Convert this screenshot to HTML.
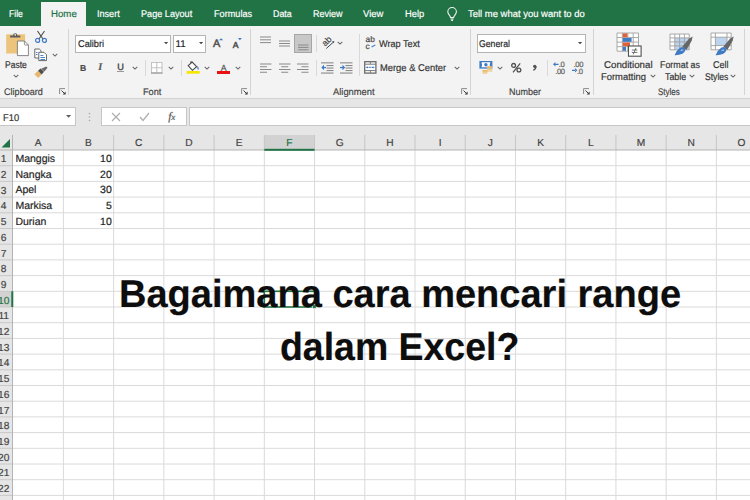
<!DOCTYPE html>
<html><head><meta charset="utf-8"><style>
html,body{margin:0;padding:0;}
body{width:750px;height:500px;overflow:hidden;position:relative;background:#fff;font-family:"Liberation Sans", sans-serif;}
.t{position:absolute;white-space:nowrap;line-height:1;font-family:"Liberation Sans", sans-serif;-webkit-text-stroke:0.18px currentColor;text-rendering:geometricPrecision;}
.big{font-size:37.6px;font-weight:bold;color:#0d0d0d;line-height:1}
</style></head><body>
<div style="position:absolute;left:0;top:0;width:750px;height:26px;background:#217346"></div>
<div style="position:absolute;left:41px;top:2px;width:45.2px;height:24px;background:#f3f3f3"></div>
<div class="t" style="left:8.80px;top:10.26px;font-size:9.80px;color:#ffffff;font-weight:normal;transform:scaleX(0.8810);transform-origin:0 0;">File</div>
<div class="t" style="left:50.70px;top:10.26px;font-size:9.80px;color:#217346;font-weight:normal;transform:scaleX(0.9860);transform-origin:0 0;">Home</div>
<div class="t" style="left:97.30px;top:10.26px;font-size:9.80px;color:#ffffff;font-weight:normal;transform:scaleX(0.9265);transform-origin:0 0;">Insert</div>
<div class="t" style="left:141.30px;top:10.26px;font-size:9.80px;color:#ffffff;font-weight:normal;transform:scaleX(0.9305);transform-origin:0 0;">Page Layout</div>
<div class="t" style="left:213.90px;top:10.26px;font-size:9.80px;color:#ffffff;font-weight:normal;transform:scaleX(0.9323);transform-origin:0 0;">Formulas</div>
<div class="t" style="left:273.30px;top:10.26px;font-size:9.80px;color:#ffffff;font-weight:normal;transform:scaleX(0.9022);transform-origin:0 0;">Data</div>
<div class="t" style="left:313.30px;top:10.26px;font-size:9.80px;color:#ffffff;font-weight:normal;transform:scaleX(0.9146);transform-origin:0 0;">Review</div>
<div class="t" style="left:363.20px;top:10.26px;font-size:9.80px;color:#ffffff;font-weight:normal;transform:scaleX(0.9635);transform-origin:0 0;">View</div>
<div class="t" style="left:404.80px;top:10.26px;font-size:9.80px;color:#ffffff;font-weight:normal;transform:scaleX(0.9534);transform-origin:0 0;">Help</div>
<svg style="position:absolute;left:445px;top:6px" width="14" height="16" viewBox="0 0 14 16"><path d="M5.6 11.6 C5.4 9.6 2.8 8.2 2.8 5.8 A4.3 4.3 0 0 1 11.4 5.8 C11.4 8.2 8.8 9.6 8.6 11.6 Z M5.8 13.2 H8.4 M6.2 14.4 H8" fill="none" stroke="#f4f4f4" stroke-width="1.05"/></svg>
<div class="t" style="left:468.00px;top:10.26px;font-size:9.80px;color:#ffffff;font-weight:normal;transform:scaleX(0.9658);transform-origin:0 0;">Tell me what you want to do</div>
<div style="position:absolute;left:0;top:26px;width:750px;height:72px;background:#f3f3f3"></div>
<div style="position:absolute;left:0;top:98px;width:750px;height:1px;background:#d2d2d2"></div>
<div style="position:absolute;left:0;top:99px;width:750px;height:51px;background:#e6e6e6"></div>
<div style="position:absolute;left:68px;top:29px;width:1px;height:66px;background:#d4d4d4"></div>
<div style="position:absolute;left:250px;top:29px;width:1px;height:66px;background:#d4d4d4"></div>
<div style="position:absolute;left:470px;top:29px;width:1px;height:66px;background:#d4d4d4"></div>
<div style="position:absolute;left:592.5px;top:29px;width:1px;height:66px;background:#d4d4d4"></div>
<div style="position:absolute;left:744px;top:29px;width:1px;height:66px;background:#d4d4d4"></div>
<div style="position:absolute;left:144.5px;top:60px;width:1px;height:16px;background:#d9d9d9"></div>
<div style="position:absolute;left:181.3px;top:60px;width:1px;height:16px;background:#d9d9d9"></div>
<div style="position:absolute;left:315.6px;top:35px;width:1px;height:17px;background:#d9d9d9"></div>
<div style="position:absolute;left:315.6px;top:60px;width:1px;height:16px;background:#d9d9d9"></div>
<div style="position:absolute;left:358.8px;top:34px;width:1px;height:42px;background:#d9d9d9"></div>
<div style="position:absolute;left:547.3px;top:60px;width:1px;height:16px;background:#d9d9d9"></div>
<div class="t" style="left:4.40px;top:87.92px;font-size:9.60px;color:#444444;font-weight:normal;transform:scaleX(0.9467);transform-origin:0 0;">Clipboard</div>
<div class="t" style="left:143.20px;top:87.92px;font-size:9.60px;color:#444444;font-weight:normal;transform:scaleX(0.9583);transform-origin:0 0;">Font</div>
<div class="t" style="left:332.80px;top:87.92px;font-size:9.60px;color:#444444;font-weight:normal;transform:scaleX(0.9749);transform-origin:0 0;">Alignment</div>
<div class="t" style="left:508.80px;top:87.92px;font-size:9.60px;color:#444444;font-weight:normal;transform:scaleX(0.9376);transform-origin:0 0;">Number</div>
<div class="t" style="left:657.80px;top:87.92px;font-size:9.60px;color:#444444;font-weight:normal;transform:scaleX(0.8333);transform-origin:0 0;">Styles</div>
<svg style="position:absolute;left:58.5px;top:88px" width="7" height="7" viewBox="0 0 7 7"><path d="M0.6 6 V0.6 H6" fill="none" stroke="#8a8a8a" stroke-width="1"/><path d="M2.5 2.5 L5.8 5.8" stroke="#3a3a3a" stroke-width="1"/><path d="M6.6 3.6 V6.6 H3.6 Z" fill="#3a3a3a"/></svg>
<svg style="position:absolute;left:240.8px;top:88px" width="7" height="7" viewBox="0 0 7 7"><path d="M0.6 6 V0.6 H6" fill="none" stroke="#8a8a8a" stroke-width="1"/><path d="M2.5 2.5 L5.8 5.8" stroke="#3a3a3a" stroke-width="1"/><path d="M6.6 3.6 V6.6 H3.6 Z" fill="#3a3a3a"/></svg>
<svg style="position:absolute;left:460.6px;top:88px" width="7" height="7" viewBox="0 0 7 7"><path d="M0.6 6 V0.6 H6" fill="none" stroke="#8a8a8a" stroke-width="1"/><path d="M2.5 2.5 L5.8 5.8" stroke="#3a3a3a" stroke-width="1"/><path d="M6.6 3.6 V6.6 H3.6 Z" fill="#3a3a3a"/></svg>
<svg style="position:absolute;left:583px;top:88px" width="7" height="7" viewBox="0 0 7 7"><path d="M0.6 6 V0.6 H6" fill="none" stroke="#8a8a8a" stroke-width="1"/><path d="M2.5 2.5 L5.8 5.8" stroke="#3a3a3a" stroke-width="1"/><path d="M6.6 3.6 V6.6 H3.6 Z" fill="#3a3a3a"/></svg>
<svg style="position:absolute;left:5px;top:31px" width="26" height="27" viewBox="0 0 26 27">
<rect x="1.2" y="3.3" width="18.9" height="19.2" fill="#ecc47c"/>
<path d="M5.1 6.6 H15.3 V4.4 H12.4 A1.9 1.9 0 0 0 8.1 4.4 H5.1 Z" fill="#5c5c5c"/>
<circle cx="10.25" cy="3.9" r="0.8" fill="#f3f3f3"/>
<path d="M12.4 10 H19.4 L23.4 14 V24.6 H12.4 Z" fill="#fff" stroke="#7a7a7a" stroke-width="0.9"/>
<path d="M19.4 10 V13.2 Q19.4 14 20.2 14 H23.4" fill="none" stroke="#7a7a7a" stroke-width="0.8"/>
</svg>
<svg style="position:absolute;left:12.80px;top:74.20px" width="6" height="4" viewBox="0 0 6 4"><path d="M0.7 0.8 L3 3.1 L5.3 0.8" fill="none" stroke="#6a6a6a" stroke-width="1.05"/></svg>
<div class="t" style="left:5.00px;top:60.96px;font-size:9.80px;color:#333;font-weight:normal;transform:scaleX(0.8706);transform-origin:0 0;">Paste</div>
<svg style="position:absolute;left:34px;top:30px" width="14" height="14" viewBox="0 0 14 14">
<path d="M3.5 1 L9.2 9.2 M10.5 1 L4.8 9.2" stroke="#4a4a4a" stroke-width="1.1" fill="none"/>
<circle cx="3.6" cy="10.4" r="2" fill="none" stroke="#3f7bc4" stroke-width="1.2"/>
<circle cx="10.4" cy="10.4" r="2" fill="none" stroke="#3f7bc4" stroke-width="1.2"/>
</svg>
<svg style="position:absolute;left:34px;top:48px" width="14" height="14" viewBox="0 0 14 14">
<path d="M0.8 1 H5.3 L7 2.7 V10 H0.8 Z" fill="#fff" stroke="#5a5a5a" stroke-width="0.9"/>
<path d="M4.8 4.3 H10 L12.5 6.8 V12.6 H4.8 Z" fill="#fff" stroke="#5a5a5a" stroke-width="0.9"/>
<path d="M2 4.5 H3.6 M2 6.5 H3.6 M6.4 7.5 H9.4 M6.4 9.5 H11 M6.4 11.5 H11" stroke="#4a86c8" stroke-width="1"/>
</svg>
<svg style="position:absolute;left:52.00px;top:53.40px" width="6" height="4" viewBox="0 0 6 4"><path d="M0.7 0.8 L3 3.1 L5.3 0.8" fill="none" stroke="#6a6a6a" stroke-width="1.05"/></svg>
<svg style="position:absolute;left:34px;top:66px" width="14" height="13" viewBox="0 0 14 13">
<path d="M0.4 8.2 L4 4.8 L7.6 8.4 L4.2 12 Z" fill="#e8b868"/>
<path d="M4 4.8 L6.6 2.4 L10 5.8 L7.6 8.4 Z" fill="#4e4e4e"/>
<path d="M7.2 2.8 L12.2 0.4 L13.6 1.8 L10.4 5.6 Z" fill="#6a6a6a"/>
</svg>
<div style="position:absolute;left:74.8px;top:34.8px;width:95.9px;height:17.8px;background:#fff;border:1px solid #b4b4b4;box-sizing:border-box"></div>
<div class="t" style="left:77.50px;top:40.46px;font-size:9.80px;color:#262626;font-weight:normal;transform:scaleX(0.9394);transform-origin:0 0;">Calibri</div>
<div style="position:absolute;left:173px;top:34.8px;width:33.4px;height:17.8px;background:#fff;border:1px solid #b4b4b4;box-sizing:border-box"></div>
<div class="t" style="left:175.50px;top:40.46px;font-size:9.80px;color:#262626;font-weight:normal;">11</div>
<svg style="position:absolute;left:163.5px;top:42.3px" width="5" height="3" viewBox="0 0 5 3"><path d="M0 0 H4.2 L2.1 2.2 Z" fill="#444"/></svg>
<svg style="position:absolute;left:198.7px;top:42.3px" width="5" height="3" viewBox="0 0 5 3"><path d="M0 0 H4.2 L2.1 2.2 Z" fill="#444"/></svg>
<div class="t" style="left:213.00px;top:39.18px;font-size:10.90px;color:#505050;font-weight:normal;-webkit-text-stroke:0.5px #505050">A</div>
<svg style="position:absolute;left:219px;top:37.8px" width="5" height="3" viewBox="0 0 5 3"><path d="M0 2.2 L2 0.2 L4.2 2.2 Z" fill="#3f7bc4"/></svg>
<div class="t" style="left:232.80px;top:40.97px;font-size:8.66px;color:#505050;font-weight:normal;-webkit-text-stroke:0.5px #505050">A</div>
<svg style="position:absolute;left:238.2px;top:37.5px" width="5" height="3" viewBox="0 0 5 3"><path d="M0 0 L3.8 0 L1.9 2.2 Z" fill="#3f7bc4"/></svg>
<div class="t" style="left:80.00px;top:63.61px;font-size:8.61px;color:#4a4a4a;font-weight:bold;">B</div>
<div class="t" style="left:98.3px;top:63.3px;font-size:10px;color:#555;font-family:'Liberation Serif',serif;font-style:italic;font-weight:bold">I</div>
<div class="t" style="left:117.20px;top:62.77px;font-size:9.17px;color:#4a4a4a;font-weight:normal;-webkit-text-stroke:0.4px #4a4a4a">U</div>
<div style="position:absolute;left:116.8px;top:71px;width:7.6px;height:1.2px;background:#999"></div>
<svg style="position:absolute;left:131.70px;top:65.70px" width="6" height="4" viewBox="0 0 6 4"><path d="M0.7 0.8 L3 3.1 L5.3 0.8" fill="none" stroke="#6a6a6a" stroke-width="1.05"/></svg>
<svg style="position:absolute;left:151px;top:61.5px" width="12" height="12" viewBox="0 0 12 12">
<rect x="0.5" y="0.5" width="10.5" height="10.5" fill="#fff"/>
<path d="M0.5 0.5 H11 V11 H0.5 Z M5.75 0.5 V11 M0.5 5.75 H11" fill="none" stroke="#c4c4c4" stroke-width="1.1"/>
<path d="M0 11 H11.5" stroke="#9a9a9a" stroke-width="1.2"/>
</svg>
<svg style="position:absolute;left:168.30px;top:65.80px" width="6" height="4" viewBox="0 0 6 4"><path d="M0.7 0.8 L3 3.1 L5.3 0.8" fill="none" stroke="#6a6a6a" stroke-width="1.05"/></svg>
<svg style="position:absolute;left:186px;top:60px" width="15" height="15" viewBox="0 0 15 15">
<path d="M5 1 L5 3" stroke="#444" stroke-width="1"/>
<path d="M2.2 5.6 L6.2 2 L10.6 6.6 L6.4 10.3 Z" fill="#fff" stroke="#444" stroke-width="1.1"/>
<path d="M11.2 5.8 Q13.6 8.2 12.4 9.8 Q11 9.6 11.3 7.8 Z" fill="#3f7bc4"/>
<rect x="0.6" y="11" width="13.1" height="2.7" fill="#f5e600"/>
</svg>
<svg style="position:absolute;left:204.20px;top:65.80px" width="6" height="4" viewBox="0 0 6 4"><path d="M0.7 0.8 L3 3.1 L5.3 0.8" fill="none" stroke="#6a6a6a" stroke-width="1.05"/></svg>
<div class="t" style="left:220.70px;top:63.66px;font-size:8.81px;color:#555;font-weight:normal;">A</div>
<div style="position:absolute;left:217.3px;top:71px;width:12.7px;height:2.7px;background:#e81010"></div>
<svg style="position:absolute;left:235.30px;top:65.80px" width="6" height="4" viewBox="0 0 6 4"><path d="M0.7 0.8 L3 3.1 L5.3 0.8" fill="none" stroke="#6a6a6a" stroke-width="1.05"/></svg>
<svg style="position:absolute;left:260px;top:36.2px" width="14" height="14" viewBox="0 0 14 14"><rect x="0" y="0.5" width="11" height="1" fill="#8a8a8a"/><rect x="0" y="3.3" width="11" height="1" fill="#8a8a8a"/><rect x="0" y="6.1" width="11" height="1" fill="#8a8a8a"/></svg>
<svg style="position:absolute;left:279px;top:39.9px" width="14" height="14" viewBox="0 0 14 14"><rect x="0" y="0.5" width="11" height="1" fill="#8a8a8a"/><rect x="0" y="3.0" width="11" height="1" fill="#8a8a8a"/><rect x="0" y="5.5" width="11" height="1" fill="#8a8a8a"/></svg>
<div style="position:absolute;left:294.2px;top:34.2px;width:17.8px;height:18.4px;background:#c8c8c8;border:1px solid #a6a6a6;box-sizing:border-box"></div>
<svg style="position:absolute;left:297.8px;top:43.5px" width="14" height="14" viewBox="0 0 14 14"><rect x="0" y="0.5" width="10.5" height="1" fill="#8a8a8a"/><rect x="0" y="2.9" width="10.5" height="1" fill="#8a8a8a"/><rect x="0" y="5.3" width="10.5" height="1" fill="#8a8a8a"/></svg>
<div class="t" style="left:321.8px;top:36.6px;font-size:8.8px;color:#444;transform:rotate(-45deg);transform-origin:50% 50%">ab</div>
<svg style="position:absolute;left:325px;top:39.5px" width="12" height="11" viewBox="0 0 12 11"><path d="M1.3 8.5 L8.2 2.3" stroke="#444" stroke-width="1"/><path d="M7 1.6 L9.4 0.9 L8.8 3.3 Z" fill="#444"/></svg>
<svg style="position:absolute;left:337.20px;top:41.00px" width="6" height="4" viewBox="0 0 6 4"><path d="M0.7 0.8 L3 3.1 L5.3 0.8" fill="none" stroke="#6a6a6a" stroke-width="1.05"/></svg>
<svg style="position:absolute;left:259.7px;top:62.5px" width="14" height="14" viewBox="0 0 14 14"><rect x="0" y="0.5" width="11.5" height="1" fill="#8a8a8a"/><rect x="0" y="3.25" width="7" height="1" fill="#8a8a8a"/><rect x="0" y="6.0" width="11.5" height="1" fill="#8a8a8a"/><rect x="0" y="8.75" width="7" height="1" fill="#8a8a8a"/></svg>
<svg style="position:absolute;left:278.7px;top:62.5px" width="14" height="14" viewBox="0 0 14 14"><rect x="0" y="0.5" width="11.5" height="1" fill="#8a8a8a"/><rect x="2.2" y="3.25" width="7" height="1" fill="#8a8a8a"/><rect x="0" y="6.0" width="11.5" height="1" fill="#8a8a8a"/><rect x="2.2" y="8.75" width="7" height="1" fill="#8a8a8a"/></svg>
<svg style="position:absolute;left:297px;top:62.5px" width="14" height="14" viewBox="0 0 14 14"><rect x="0" y="0.5" width="11.5" height="1" fill="#8a8a8a"/><rect x="4.5" y="3.25" width="7" height="1" fill="#8a8a8a"/><rect x="0" y="6.0" width="11.5" height="1" fill="#8a8a8a"/><rect x="4.5" y="8.75" width="7" height="1" fill="#8a8a8a"/></svg>
<svg style="position:absolute;left:321.2px;top:61.5px" width="13" height="12" viewBox="0 0 13 12">
<g fill="#8a8a8a"><rect x="0" y="0.3" width="12.5" height="1.1"/><rect x="5.5" y="3" width="7" height="1.1"/><rect x="5.5" y="5.5" width="7" height="1.1"/><rect x="5.5" y="8" width="7" height="1.1"/><rect x="0" y="10.5" width="12.5" height="1.1"/></g>
<path d="M0.3 5.5 L3 2.8 V8.2 Z" fill="#3f7bc4"/><rect x="2" y="4.9" width="3" height="1.3" fill="#3f7bc4"/>
</svg>
<svg style="position:absolute;left:340px;top:61.5px" width="13" height="12" viewBox="0 0 13 12">
<g fill="#8a8a8a"><rect x="0" y="0.3" width="12.5" height="1.1"/><rect x="5.5" y="3" width="7" height="1.1"/><rect x="5.5" y="5.5" width="7" height="1.1"/><rect x="5.5" y="8" width="7" height="1.1"/><rect x="0" y="10.5" width="12.5" height="1.1"/></g>
<path d="M5.2 5.5 L2.5 2.8 V8.2 Z" fill="#3f7bc4"/><rect x="0" y="4.9" width="3" height="1.3" fill="#3f7bc4"/>
</svg>
<div class="t" style="left:365.6px;top:36.2px;font-size:8.3px;color:#444;line-height:6.4px">ab<br>c</div>
<svg style="position:absolute;left:371.3px;top:44.2px" width="5" height="4" viewBox="0 0 5 4"><path d="M0.5 3 L4.3 1" fill="none" stroke="#4a86c8" stroke-width="1.3"/></svg>
<div class="t" style="left:379.00px;top:40.26px;font-size:9.80px;color:#333;font-weight:normal;transform:scaleX(0.9324);transform-origin:0 0;">Wrap Text</div>
<svg style="position:absolute;left:364px;top:60.8px" width="13" height="13" viewBox="0 0 13 13">
<rect x="0.7" y="0.7" width="11.2" height="11.4" fill="#fff" stroke="#6a6a6a" stroke-width="1.3"/>
<path d="M0.7 3.2 H11.9 M0.7 9.6 H11.9 M6.3 0.7 V3.2 M6.3 9.6 V12" stroke="#7a7a7a" stroke-width="1"/>
<path d="M2.8 6.4 H9.8" stroke="#3f7bc4" stroke-width="1.2" stroke-dasharray="1.6 0.8"/>
<path d="M2 6.4 L3.4 5.2 V7.6 Z M10.6 6.4 L9.2 5.2 V7.6 Z" fill="#3f7bc4"/>
</svg>
<div class="t" style="left:379.80px;top:63.86px;font-size:9.80px;color:#333;font-weight:normal;transform:scaleX(0.9554);transform-origin:0 0;">Merge &amp; Center</div>
<svg style="position:absolute;left:453.60px;top:66.00px" width="6" height="4" viewBox="0 0 6 4"><path d="M0.7 0.8 L3 3.1 L5.3 0.8" fill="none" stroke="#6a6a6a" stroke-width="1.05"/></svg>
<div style="position:absolute;left:476.7px;top:34.1px;width:109.8px;height:18.5px;background:#fff;border:1px solid #b4b4b4;box-sizing:border-box"></div>
<div class="t" style="left:479.40px;top:40.46px;font-size:9.80px;color:#262626;font-weight:normal;transform:scaleX(0.8886);transform-origin:0 0;">General</div>
<svg style="position:absolute;left:578px;top:42.3px" width="5" height="3" viewBox="0 0 5 3"><path d="M0 0 H4.2 L2.1 2.2 Z" fill="#444"/></svg>
<svg style="position:absolute;left:478.6px;top:61.2px" width="14" height="13" viewBox="0 0 14 13">
<rect x="0.4" y="0" width="13" height="7.6" fill="#3f7bc4"/>
<path d="M2.4 1.3 H11.4 Q10 3.8 11.4 6.3 H2.4 Q3.8 3.8 2.4 1.3 Z" fill="#fff"/>
<circle cx="6.9" cy="3.8" r="1.7" fill="#3f7bc4"/>
<rect x="7.8" y="5.2" width="5.4" height="1.8" fill="#eab96a"/><rect x="7.8" y="7.4" width="5.4" height="1.6" fill="#f0cc8a"/><rect x="7.8" y="9.3" width="5.4" height="1.4" fill="#f0cc8a"/>
<rect x="3.4" y="9" width="5" height="1.8" fill="#eab96a"/><rect x="3.4" y="11.1" width="5" height="1.6" fill="#f0cc8a"/>
</svg>
<svg style="position:absolute;left:496.50px;top:65.80px" width="6" height="4" viewBox="0 0 6 4"><path d="M0.7 0.8 L3 3.1 L5.3 0.8" fill="none" stroke="#6a6a6a" stroke-width="1.05"/></svg>
<svg style="position:absolute;left:510px;top:62px" width="13" height="12" viewBox="0 0 13 12"><circle cx="3.6" cy="3.4" r="1.9" fill="none" stroke="#505050" stroke-width="1.3"/><circle cx="8.9" cy="8" r="1.9" fill="none" stroke="#505050" stroke-width="1.3"/><path d="M10.2 1.4 L3 10.4" stroke="#505050" stroke-width="1.2"/></svg>
<svg style="position:absolute;left:531px;top:63px" width="7" height="9" viewBox="0 0 7 9"><circle cx="3.7" cy="3.3" r="1.6" fill="#505050"/><path d="M5.2 3.4 Q5 6.2 2.4 7.4" fill="none" stroke="#505050" stroke-width="1.3"/></svg>
<div class="t" style="left:555.3px;top:62.3px;font-size:7.6px;color:#606060;line-height:6.2px;letter-spacing:-0.4px">&nbsp;&nbsp;.0<br>.00</div>
<svg style="position:absolute;left:552.6px;top:62.1px" width="6" height="5" viewBox="0 0 6 5"><path d="M0 2.3 L2.4 0 V4.6 Z M2 1.7 H5.6 V2.9 H2 Z" fill="#3f7bc4"/></svg>
<div class="t" style="left:573.6px;top:62.3px;font-size:7.6px;color:#606060;line-height:6.2px;letter-spacing:-0.4px">.00<br>&nbsp;&nbsp;.0</div>
<svg style="position:absolute;left:571.8px;top:68px" width="7" height="5" viewBox="0 0 7 5"><path d="M5.4 2.3 L3 0 V4.6 Z M0 1.7 H3.4 V2.9 H0 Z" fill="#3f7bc4"/></svg>
<svg style="position:absolute;left:616px;top:31.5px" width="27" height="25" viewBox="0 0 27 25">
<rect x="1" y="1" width="21.5" height="18.2" fill="#fff"/>
<path d="M1 1 H22.5 V19.2 H1 Z M6.4 1 V19.2 M11.8 1 V19.2 M17.2 1 V19.2 M1 5.55 H22.5 M1 10.1 H22.5 M1 14.65 H22.5" fill="none" stroke="#a0a0a0" stroke-width="0.9"/>
<rect x="6.8" y="1.4" width="4.6" height="3.8" fill="#e0603a"/>
<rect x="6.8" y="6" width="8.8" height="3.8" fill="#3f7bc4"/>
<rect x="6.8" y="10.5" width="7.2" height="3.8" fill="#e0603a"/>
<rect x="6.8" y="15" width="3.2" height="3.8" fill="#3f7bc4"/>
<rect x="12.5" y="14" width="12.6" height="10.2" fill="#fff" stroke="#505050" stroke-width="1.1"/>
<path d="M15.8 18 H21.4 M15.8 20.4 H21.4 M20 16 L17.2 22.4" stroke="#505050" stroke-width="0.8"/>
</svg>
<div class="t" style="left:604.00px;top:60.66px;font-size:9.80px;color:#333;font-weight:normal;transform:scaleX(0.9908);transform-origin:0 0;">Conditional</div>
<div class="t" style="left:601.00px;top:72.66px;font-size:9.80px;color:#333;font-weight:normal;transform:scaleX(0.9606);transform-origin:0 0;">Formatting</div>
<svg style="position:absolute;left:649.50px;top:74.00px" width="6" height="4" viewBox="0 0 6 4"><path d="M0.7 0.8 L3 3.1 L5.3 0.8" fill="none" stroke="#6a6a6a" stroke-width="1.05"/></svg>
<svg style="position:absolute;left:669px;top:32px" width="24" height="24" viewBox="0 0 24 24">
<rect x="1" y="2" width="19.2" height="15.8" fill="#fff"/>
<rect x="5.8" y="5.9" width="14.4" height="11.9" fill="#bcd4ee"/>
<path d="M1 2 H20.2 V17.8 H1 Z M5.8 2 V17.8 M10.6 2 V17.8 M15.4 2 V17.8 M1 5.9 H20.2 M1 9.9 H20.2 M1 13.9 H20.2" fill="none" stroke="#a0a0a0" stroke-width="0.9"/>
<path d="M13.4 14.4 L20.2 6.6 L23.6 4.6 L22.8 8.4 L17.4 18 Z" fill="#666"/>
<path d="M5.6 23.2 Q7.4 18.4 11.4 15.6 Q14.8 14.2 16.2 16.6 Q16.8 19.8 13.4 21.8 Q9.6 23.4 5.6 23.2 Z" fill="#3f7bc4"/>
<path d="M11.6 18.6 Q13 17.6 14.2 18.2" fill="none" stroke="#fff" stroke-width="0.7"/>
</svg>
<div class="t" style="left:660.00px;top:60.66px;font-size:9.80px;color:#333;font-weight:normal;transform:scaleX(0.9070);transform-origin:0 0;">Format as</div>
<div class="t" style="left:665.40px;top:72.66px;font-size:9.80px;color:#333;font-weight:normal;transform:scaleX(0.9051);transform-origin:0 0;">Table</div>
<svg style="position:absolute;left:688.50px;top:74.00px" width="6" height="4" viewBox="0 0 6 4"><path d="M0.7 0.8 L3 3.1 L5.3 0.8" fill="none" stroke="#6a6a6a" stroke-width="1.05"/></svg>
<svg style="position:absolute;left:710px;top:32px" width="24" height="24" viewBox="0 0 24 24">
<rect x="1" y="1" width="20.2" height="16.8" fill="#fff"/>
<rect x="5.4" y="5.2" width="11.6" height="8.4" fill="#bcd4ee"/>
<path d="M1 1 H21.2 V17.8 H1 Z M5.4 1 V17.8 M17 1 V17.8 M1 5.2 H21.2 M1 13.6 H21.2" fill="none" stroke="#a0a0a0" stroke-width="0.9"/>
<path d="M13.4 14.4 L20.2 6.6 L23.6 4.6 L22.8 8.4 L17.4 18 Z" fill="#666"/>
<path d="M5.6 23.2 Q7.4 18.4 11.4 15.6 Q14.8 14.2 16.2 16.6 Q16.8 19.8 13.4 21.8 Q9.6 23.4 5.6 23.2 Z" fill="#3f7bc4"/>
<path d="M11.6 18.6 Q13 17.6 14.2 18.2" fill="none" stroke="#fff" stroke-width="0.7"/>
</svg>
<div class="t" style="left:713.00px;top:60.66px;font-size:9.80px;color:#333;font-weight:normal;transform:scaleX(0.9228);transform-origin:0 0;">Cell</div>
<div class="t" style="left:704.60px;top:72.66px;font-size:9.80px;color:#333;font-weight:normal;transform:scaleX(0.8762);transform-origin:0 0;">Styles</div>
<svg style="position:absolute;left:729.70px;top:74.00px" width="6" height="4" viewBox="0 0 6 4"><path d="M0.7 0.8 L3 3.1 L5.3 0.8" fill="none" stroke="#6a6a6a" stroke-width="1.05"/></svg>
<div style="position:absolute;left:-2px;top:106.6px;width:78.4px;height:19.9px;background:#fff;border:1px solid #c6c6c6;box-sizing:border-box"></div>
<div class="t" style="left:2.90px;top:114.06px;font-size:9.80px;color:#333;font-weight:normal;transform:scaleX(0.9524);transform-origin:0 0;">F10</div>
<svg style="position:absolute;left:66px;top:114.8px" width="6" height="4" viewBox="0 0 6 4"><path d="M0 0 H5.2 L2.6 2.8 Z" fill="#606060"/></svg>
<svg style="position:absolute;left:87.5px;top:112px" width="3" height="10" viewBox="0 0 3 10"><circle cx="1.5" cy="1.5" r="0.8" fill="#aaa"/><circle cx="1.5" cy="5" r="0.8" fill="#aaa"/><circle cx="1.5" cy="8.5" r="0.8" fill="#aaa"/></svg>
<div style="position:absolute;left:100.7px;top:106.6px;width:85.9px;height:19.9px;background:#fff;border:1px solid #c6c6c6;box-sizing:border-box"></div>
<svg style="position:absolute;left:111px;top:112px" width="10" height="10" viewBox="0 0 10 10"><path d="M1 1 L9 9 M9 1 L1 9" stroke="#adadad" stroke-width="1.1"/></svg>
<svg style="position:absolute;left:138.5px;top:112px" width="11" height="10" viewBox="0 0 11 10"><path d="M1 5 L4 8.5 L10 1" fill="none" stroke="#b0b0b0" stroke-width="1.3"/></svg>
<div class="t" style="left:168.3px;top:111.8px;font-size:11.5px;color:#555;font-family:'Liberation Serif',serif;font-style:italic;letter-spacing:-0.3px">f<span style="font-size:9px">x</span></div>
<div style="position:absolute;left:189.3px;top:106.6px;width:570px;height:19.9px;background:#fff;border:1px solid #c6c6c6;box-sizing:border-box"></div>
<svg style="position:absolute;left:0;top:0" width="750" height="500" viewBox="0 0 750 500">
<rect x="12.5" y="150" width="750" height="360" fill="#ffffff"/>
<rect x="12.5" y="135" width="750" height="15" fill="#e6e6e6"/>
<rect x="0" y="150" width="12.5" height="360" fill="#e6e6e6"/>
<rect x="264.32" y="135" width="50.23" height="15" fill="#d2d2d2"/>
<rect x="0" y="291.30" width="12.5" height="15.70" fill="#d2d2d2"/>
<line x1="12.5" y1="165.70" x2="750" y2="165.70" stroke="#dadada" stroke-width="1"/>
<line x1="12.5" y1="181.40" x2="750" y2="181.40" stroke="#dadada" stroke-width="1"/>
<line x1="12.5" y1="197.10" x2="750" y2="197.10" stroke="#dadada" stroke-width="1"/>
<line x1="12.5" y1="212.80" x2="750" y2="212.80" stroke="#dadada" stroke-width="1"/>
<line x1="12.5" y1="228.50" x2="750" y2="228.50" stroke="#dadada" stroke-width="1"/>
<line x1="12.5" y1="244.20" x2="750" y2="244.20" stroke="#dadada" stroke-width="1"/>
<line x1="12.5" y1="259.90" x2="750" y2="259.90" stroke="#dadada" stroke-width="1"/>
<line x1="12.5" y1="275.60" x2="750" y2="275.60" stroke="#dadada" stroke-width="1"/>
<line x1="12.5" y1="291.30" x2="750" y2="291.30" stroke="#dadada" stroke-width="1"/>
<line x1="12.5" y1="307.00" x2="750" y2="307.00" stroke="#dadada" stroke-width="1"/>
<line x1="12.5" y1="322.70" x2="750" y2="322.70" stroke="#dadada" stroke-width="1"/>
<line x1="12.5" y1="338.40" x2="750" y2="338.40" stroke="#dadada" stroke-width="1"/>
<line x1="12.5" y1="354.10" x2="750" y2="354.10" stroke="#dadada" stroke-width="1"/>
<line x1="12.5" y1="369.80" x2="750" y2="369.80" stroke="#dadada" stroke-width="1"/>
<line x1="12.5" y1="385.50" x2="750" y2="385.50" stroke="#dadada" stroke-width="1"/>
<line x1="12.5" y1="401.20" x2="750" y2="401.20" stroke="#dadada" stroke-width="1"/>
<line x1="12.5" y1="416.90" x2="750" y2="416.90" stroke="#dadada" stroke-width="1"/>
<line x1="12.5" y1="432.60" x2="750" y2="432.60" stroke="#dadada" stroke-width="1"/>
<line x1="12.5" y1="448.30" x2="750" y2="448.30" stroke="#dadada" stroke-width="1"/>
<line x1="12.5" y1="464.00" x2="750" y2="464.00" stroke="#dadada" stroke-width="1"/>
<line x1="12.5" y1="479.70" x2="750" y2="479.70" stroke="#dadada" stroke-width="1"/>
<line x1="12.5" y1="495.40" x2="750" y2="495.40" stroke="#dadada" stroke-width="1"/>
<line x1="63.40" y1="150" x2="63.40" y2="500" stroke="#dadada" stroke-width="1"/>
<line x1="113.63" y1="150" x2="113.63" y2="500" stroke="#dadada" stroke-width="1"/>
<line x1="163.86" y1="150" x2="163.86" y2="500" stroke="#dadada" stroke-width="1"/>
<line x1="214.09" y1="150" x2="214.09" y2="500" stroke="#dadada" stroke-width="1"/>
<line x1="264.32" y1="150" x2="264.32" y2="500" stroke="#dadada" stroke-width="1"/>
<line x1="314.55" y1="150" x2="314.55" y2="500" stroke="#dadada" stroke-width="1"/>
<line x1="364.78" y1="150" x2="364.78" y2="500" stroke="#dadada" stroke-width="1"/>
<line x1="415.01" y1="150" x2="415.01" y2="500" stroke="#dadada" stroke-width="1"/>
<line x1="465.24" y1="150" x2="465.24" y2="500" stroke="#dadada" stroke-width="1"/>
<line x1="515.47" y1="150" x2="515.47" y2="500" stroke="#dadada" stroke-width="1"/>
<line x1="565.70" y1="150" x2="565.70" y2="500" stroke="#dadada" stroke-width="1"/>
<line x1="615.93" y1="150" x2="615.93" y2="500" stroke="#dadada" stroke-width="1"/>
<line x1="666.16" y1="150" x2="666.16" y2="500" stroke="#dadada" stroke-width="1"/>
<line x1="716.39" y1="150" x2="716.39" y2="500" stroke="#dadada" stroke-width="1"/>
<line x1="0" y1="165.70" x2="12.5" y2="165.70" stroke="#c8c8c8" stroke-width="1"/>
<line x1="0" y1="181.40" x2="12.5" y2="181.40" stroke="#c8c8c8" stroke-width="1"/>
<line x1="0" y1="197.10" x2="12.5" y2="197.10" stroke="#c8c8c8" stroke-width="1"/>
<line x1="0" y1="212.80" x2="12.5" y2="212.80" stroke="#c8c8c8" stroke-width="1"/>
<line x1="0" y1="228.50" x2="12.5" y2="228.50" stroke="#c8c8c8" stroke-width="1"/>
<line x1="0" y1="244.20" x2="12.5" y2="244.20" stroke="#c8c8c8" stroke-width="1"/>
<line x1="0" y1="259.90" x2="12.5" y2="259.90" stroke="#c8c8c8" stroke-width="1"/>
<line x1="0" y1="275.60" x2="12.5" y2="275.60" stroke="#c8c8c8" stroke-width="1"/>
<line x1="0" y1="291.30" x2="12.5" y2="291.30" stroke="#c8c8c8" stroke-width="1"/>
<line x1="0" y1="307.00" x2="12.5" y2="307.00" stroke="#c8c8c8" stroke-width="1"/>
<line x1="0" y1="322.70" x2="12.5" y2="322.70" stroke="#c8c8c8" stroke-width="1"/>
<line x1="0" y1="338.40" x2="12.5" y2="338.40" stroke="#c8c8c8" stroke-width="1"/>
<line x1="0" y1="354.10" x2="12.5" y2="354.10" stroke="#c8c8c8" stroke-width="1"/>
<line x1="0" y1="369.80" x2="12.5" y2="369.80" stroke="#c8c8c8" stroke-width="1"/>
<line x1="0" y1="385.50" x2="12.5" y2="385.50" stroke="#c8c8c8" stroke-width="1"/>
<line x1="0" y1="401.20" x2="12.5" y2="401.20" stroke="#c8c8c8" stroke-width="1"/>
<line x1="0" y1="416.90" x2="12.5" y2="416.90" stroke="#c8c8c8" stroke-width="1"/>
<line x1="0" y1="432.60" x2="12.5" y2="432.60" stroke="#c8c8c8" stroke-width="1"/>
<line x1="0" y1="448.30" x2="12.5" y2="448.30" stroke="#c8c8c8" stroke-width="1"/>
<line x1="0" y1="464.00" x2="12.5" y2="464.00" stroke="#c8c8c8" stroke-width="1"/>
<line x1="0" y1="479.70" x2="12.5" y2="479.70" stroke="#c8c8c8" stroke-width="1"/>
<line x1="0" y1="495.40" x2="12.5" y2="495.40" stroke="#c8c8c8" stroke-width="1"/>
<line x1="63.40" y1="135" x2="63.40" y2="150" stroke="#c6c6c6" stroke-width="1"/>
<line x1="113.63" y1="135" x2="113.63" y2="150" stroke="#c6c6c6" stroke-width="1"/>
<line x1="163.86" y1="135" x2="163.86" y2="150" stroke="#c6c6c6" stroke-width="1"/>
<line x1="214.09" y1="135" x2="214.09" y2="150" stroke="#c6c6c6" stroke-width="1"/>
<line x1="264.32" y1="135" x2="264.32" y2="150" stroke="#c6c6c6" stroke-width="1"/>
<line x1="314.55" y1="135" x2="314.55" y2="150" stroke="#c6c6c6" stroke-width="1"/>
<line x1="364.78" y1="135" x2="364.78" y2="150" stroke="#c6c6c6" stroke-width="1"/>
<line x1="415.01" y1="135" x2="415.01" y2="150" stroke="#c6c6c6" stroke-width="1"/>
<line x1="465.24" y1="135" x2="465.24" y2="150" stroke="#c6c6c6" stroke-width="1"/>
<line x1="515.47" y1="135" x2="515.47" y2="150" stroke="#c6c6c6" stroke-width="1"/>
<line x1="565.70" y1="135" x2="565.70" y2="150" stroke="#c6c6c6" stroke-width="1"/>
<line x1="615.93" y1="135" x2="615.93" y2="150" stroke="#c6c6c6" stroke-width="1"/>
<line x1="666.16" y1="135" x2="666.16" y2="150" stroke="#c6c6c6" stroke-width="1"/>
<line x1="716.39" y1="135" x2="716.39" y2="150" stroke="#c6c6c6" stroke-width="1"/>
<line x1="12.5" y1="135" x2="12.5" y2="500" stroke="#b4b4b4" stroke-width="1"/>
<line x1="0" y1="150" x2="750" y2="150" stroke="#b4b4b4" stroke-width="1"/>
<path d="M1.5 147.5 L10 139 V147.5 Z" fill="#217346"/>
<rect x="264.32" y="148.8" width="50.23" height="2" fill="#217346"/>
<rect x="11.3" y="291.30" width="2" height="15.70" fill="#217346"/>
<rect x="264.32" y="291.30" width="50.23" height="15.70" fill="none" stroke="#217346" stroke-width="1.6"/>
<rect x="312.25" y="304.70" width="4" height="4" fill="#217346" stroke="#fff" stroke-width="0.8"/>
</svg>
<div class="t" style="left:18.28px;top:139.14px;width:40px;text-align:center;font-size:10.2px;color:#444">A</div>
<div class="t" style="left:68.52px;top:139.14px;width:40px;text-align:center;font-size:10.2px;color:#444">B</div>
<div class="t" style="left:118.75px;top:139.14px;width:40px;text-align:center;font-size:10.2px;color:#444">C</div>
<div class="t" style="left:168.97px;top:139.14px;width:40px;text-align:center;font-size:10.2px;color:#444">D</div>
<div class="t" style="left:219.21px;top:139.14px;width:40px;text-align:center;font-size:10.2px;color:#444">E</div>
<div class="t" style="left:269.44px;top:139.14px;width:40px;text-align:center;font-size:10.2px;color:#217346">F</div>
<div class="t" style="left:319.66px;top:139.14px;width:40px;text-align:center;font-size:10.2px;color:#444">G</div>
<div class="t" style="left:369.89px;top:139.14px;width:40px;text-align:center;font-size:10.2px;color:#444">H</div>
<div class="t" style="left:420.12px;top:139.14px;width:40px;text-align:center;font-size:10.2px;color:#444">I</div>
<div class="t" style="left:470.35px;top:139.14px;width:40px;text-align:center;font-size:10.2px;color:#444">J</div>
<div class="t" style="left:520.59px;top:139.14px;width:40px;text-align:center;font-size:10.2px;color:#444">K</div>
<div class="t" style="left:570.81px;top:139.14px;width:40px;text-align:center;font-size:10.2px;color:#444">L</div>
<div class="t" style="left:621.04px;top:139.14px;width:40px;text-align:center;font-size:10.2px;color:#444">M</div>
<div class="t" style="left:671.27px;top:139.14px;width:40px;text-align:center;font-size:10.2px;color:#444">N</div>
<div class="t" style="left:721.50px;top:139.14px;width:40px;text-align:center;font-size:10.2px;color:#444">O</div>
<div class="t" style="left:-16.3px;top:155.34px;width:40px;text-align:center;font-size:10.2px;color:#444">1</div>
<div class="t" style="left:-16.3px;top:171.04px;width:40px;text-align:center;font-size:10.2px;color:#444">2</div>
<div class="t" style="left:-16.3px;top:186.74px;width:40px;text-align:center;font-size:10.2px;color:#444">3</div>
<div class="t" style="left:-16.3px;top:202.44px;width:40px;text-align:center;font-size:10.2px;color:#444">4</div>
<div class="t" style="left:-16.3px;top:218.14px;width:40px;text-align:center;font-size:10.2px;color:#444">5</div>
<div class="t" style="left:-16.3px;top:233.84px;width:40px;text-align:center;font-size:10.2px;color:#444">6</div>
<div class="t" style="left:-16.3px;top:249.54px;width:40px;text-align:center;font-size:10.2px;color:#444">7</div>
<div class="t" style="left:-16.3px;top:265.24px;width:40px;text-align:center;font-size:10.2px;color:#444">8</div>
<div class="t" style="left:-16.3px;top:280.94px;width:40px;text-align:center;font-size:10.2px;color:#444">9</div>
<div class="t" style="left:-16.3px;top:296.64px;width:40px;text-align:center;font-size:10.2px;color:#217346">10</div>
<div class="t" style="left:-16.3px;top:312.34px;width:40px;text-align:center;font-size:10.2px;color:#444">11</div>
<div class="t" style="left:-16.3px;top:328.04px;width:40px;text-align:center;font-size:10.2px;color:#444">12</div>
<div class="t" style="left:-16.3px;top:343.74px;width:40px;text-align:center;font-size:10.2px;color:#444">13</div>
<div class="t" style="left:-16.3px;top:359.44px;width:40px;text-align:center;font-size:10.2px;color:#444">14</div>
<div class="t" style="left:-16.3px;top:375.14px;width:40px;text-align:center;font-size:10.2px;color:#444">15</div>
<div class="t" style="left:-16.3px;top:390.84px;width:40px;text-align:center;font-size:10.2px;color:#444">16</div>
<div class="t" style="left:-16.3px;top:406.54px;width:40px;text-align:center;font-size:10.2px;color:#444">17</div>
<div class="t" style="left:-16.3px;top:422.24px;width:40px;text-align:center;font-size:10.2px;color:#444">18</div>
<div class="t" style="left:-16.3px;top:437.94px;width:40px;text-align:center;font-size:10.2px;color:#444">19</div>
<div class="t" style="left:-16.3px;top:453.64px;width:40px;text-align:center;font-size:10.2px;color:#444">20</div>
<div class="t" style="left:-16.3px;top:469.34px;width:40px;text-align:center;font-size:10.2px;color:#444">21</div>
<div class="t" style="left:-16.3px;top:485.04px;width:40px;text-align:center;font-size:10.2px;color:#444">22</div>
<div class="t" style="left:15.40px;top:154.00px;font-size:10.50px;color:#222;font-weight:normal;">Manggis</div>
<div class="t" style="left:60px;top:154.00px;width:51.8px;text-align:right;font-size:10.50px;color:#222">10</div>
<div class="t" style="left:15.40px;top:169.70px;font-size:10.50px;color:#222;font-weight:normal;">Nangka</div>
<div class="t" style="left:60px;top:169.70px;width:51.8px;text-align:right;font-size:10.50px;color:#222">20</div>
<div class="t" style="left:15.40px;top:185.40px;font-size:10.50px;color:#222;font-weight:normal;">Apel</div>
<div class="t" style="left:60px;top:185.40px;width:51.8px;text-align:right;font-size:10.50px;color:#222">30</div>
<div class="t" style="left:15.40px;top:201.10px;font-size:10.50px;color:#222;font-weight:normal;">Markisa</div>
<div class="t" style="left:60px;top:201.10px;width:51.8px;text-align:right;font-size:10.50px;color:#222">5</div>
<div class="t" style="left:15.40px;top:216.80px;font-size:10.50px;color:#222;font-weight:normal;">Durian</div>
<div class="t" style="left:60px;top:216.80px;width:51.8px;text-align:right;font-size:10.50px;color:#222">10</div>
<div class="t big" style="left:118.9px;top:276.3px;transform:scale(1.0116,1.035);transform-origin:0 31px">Bagaimana cara mencari range</div>
<div class="t big" style="left:279.8px;top:329px;transform:scale(0.996,1.035);transform-origin:0 31px">dalam Excel?</div>
</body></html>
